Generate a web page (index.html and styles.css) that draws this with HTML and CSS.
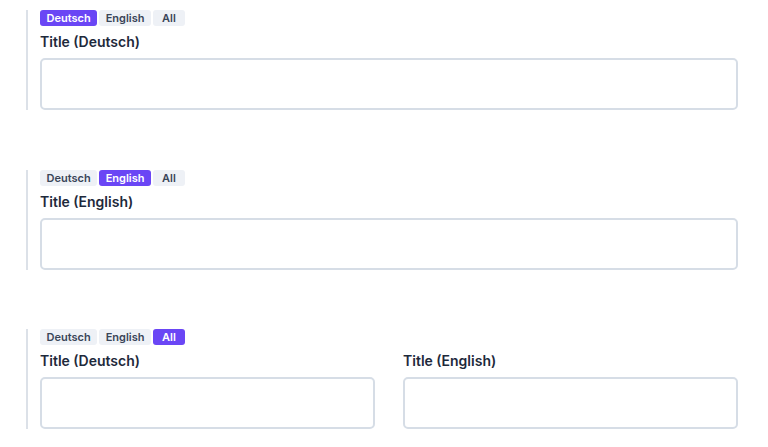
FILE: index.html
```html
<!DOCTYPE html>
<html lang="en">
<head>
<meta charset="utf-8">
<title>Translatable fields</title>
<link rel="stylesheet" href="styles.css">
</head>
<body>
<div class="page">
  <section class="field">
    <div class="tabs">
      <span class="tab active">Deutsch</span>
      <span class="tab">English</span>
      <span class="tab tab-all">All</span>
    </div>
    <div class="cols one">
      <div class="col">
        <label class="label">Title (Deutsch)</label>
        <input class="input" type="text">
      </div>
    </div>
  </section>

  <section class="field">
    <div class="tabs">
      <span class="tab">Deutsch</span>
      <span class="tab active">English</span>
      <span class="tab tab-all">All</span>
    </div>
    <div class="cols one">
      <div class="col">
        <label class="label">Title (English)</label>
        <input class="input" type="text">
      </div>
    </div>
  </section>

  <section class="field">
    <div class="tabs">
      <span class="tab">Deutsch</span>
      <span class="tab">English</span>
      <span class="tab tab-all active">All</span>
    </div>
    <div class="cols two">
      <div class="col">
        <label class="label">Title (Deutsch)</label>
        <input class="input" type="text">
      </div>
      <div class="col">
        <label class="label">Title (English)</label>
        <input class="input" type="text">
      </div>
    </div>
  </section>
</div>
</body>
</html>
```

FILE: styles.css
```css
* { box-sizing: border-box; }

html, body {
  margin: 0;
  padding: 0;
  background: #ffffff;
}

body {
  font-family: Inter, "Noto Sans", sans-serif;
  color: #1e293b;
}

.page {
  padding: 10px 30px 0 26px;
  display: flex;
  flex-direction: column;
  gap: 59.5px;
}

.field {
  border-left: 2px solid #dce1e8;
  padding-left: 12px;
}

.tabs {
  display: flex;
  gap: 2px;
  height: 16px;
}

.tab {
  display: inline-flex;
  align-items: center;
  justify-content: center;
  height: 16px;
  padding: 0 6.5px;
  border-radius: 3px;
  background: #eef1f6;
  color: #3a4558;
  font-size: 11px;
  font-weight: 600;
  line-height: 16px;
}

.tab-all {
  min-width: 32px;
}

.tab.active {
  background: #6a46f5;
  color: #ffffff;
}

.cols {
  display: grid;
  margin-top: 6px;
}

.cols.one { grid-template-columns: 1fr; }
.cols.two { grid-template-columns: 1fr 1fr; column-gap: 28px; }

.col {
  display: flex;
  flex-direction: column;
}

.label {
  font-size: 14px;
  font-weight: 600;
  line-height: 20px;
  color: #1e293b;
  margin-bottom: 6px;
}

.input {
  display: block;
  width: 100%;
  height: 52px;
  border: 2px solid #d6dde6;
  border-radius: 5px;
  background: #ffffff;
  outline: none;
  font: inherit;
  padding: 0 10px;
}
```
